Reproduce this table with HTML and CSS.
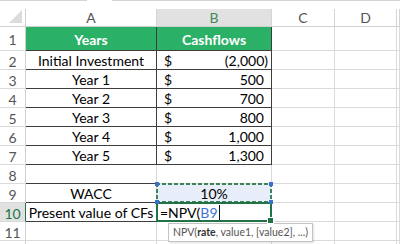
FILE: index.html
```html
<!DOCTYPE html>
<html>
<head>
<meta charset="utf-8">
<link rel="stylesheet" href="styles.css">
</head>
<body>
<div class="sheet">
  <div class="topbar"><span class="seg seg1"></span><span class="seg seg2"></span></div>
  <div class="grid">
    <div class="c corner"><span class="tri"></span></div>
    <div class="c h">A</div>
    <div class="c h sel">B</div>
    <div class="c h">C</div>
    <div class="c h">D</div>
    <div class="c h"></div>

    <div class="c rh">1</div>
    <div class="c ctr green bd-b bd-r">Years</div>
    <div class="c ctr green bd-b bd-r">Cashflows</div>
    <div class="c"></div><div class="c"></div><div class="c"></div>

    <div class="c rh">2</div>
    <div class="c ctr bd-b bd-r">Initial Investment</div>
    <div class="c acc bd-b bd-r"><span>$</span><span>(2,000)</span></div>
    <div class="c"></div><div class="c"></div><div class="c"></div>

    <div class="c rh">3</div>
    <div class="c ctr bd-b bd-r">Year 1</div>
    <div class="c acc bd-b bd-r"><span>$</span><span class="pos">500</span></div>
    <div class="c"></div><div class="c"></div><div class="c"></div>

    <div class="c rh">4</div>
    <div class="c ctr bd-b bd-r">Year 2</div>
    <div class="c acc bd-b bd-r"><span>$</span><span class="pos">700</span></div>
    <div class="c"></div><div class="c"></div><div class="c"></div>

    <div class="c rh">5</div>
    <div class="c ctr bd-b bd-r">Year 3</div>
    <div class="c acc bd-b bd-r"><span>$</span><span class="pos">800</span></div>
    <div class="c"></div><div class="c"></div><div class="c"></div>

    <div class="c rh">6</div>
    <div class="c ctr bd-b bd-r">Year 4</div>
    <div class="c acc bd-b bd-r"><span>$</span><span class="pos">1,000</span></div>
    <div class="c"></div><div class="c"></div><div class="c"></div>

    <div class="c rh">7</div>
    <div class="c ctr bd-b bd-r">Year 5</div>
    <div class="c acc bd-b bd-r"><span>$</span><span class="pos">1,300</span></div>
    <div class="c"></div><div class="c"></div><div class="c"></div>

    <div class="c rh">8</div>
    <div class="c bd-b"></div>
    <div class="c"></div>
    <div class="c"></div><div class="c"></div><div class="c"></div>

    <div class="c rh">9</div>
    <div class="c ctr bd-b">WACC</div>
    <div class="c ctr ref">10%<span class="sq tl"></span><span class="sq tr"></span><span class="sq bl"></span><span class="sq br"></span></div>
    <div class="c"></div><div class="c"></div><div class="c"></div>

    <div class="c rh rsel">10</div>
    <div class="c ctr bd-b">Present value of CFs</div>
    <div class="c edit">=NPV(<span class="blue">B9</span><span class="caret"></span><span class="handle"></span></div>
    <div class="c"></div><div class="c"></div><div class="c"></div>

    <div class="c rh">11</div>
    <div class="c"></div>
    <div class="c"></div>
    <div class="c"></div><div class="c"></div><div class="c"></div>

    <div class="c rh"></div>
    <div class="c"></div>
    <div class="c"></div>
    <div class="c"></div><div class="c"></div><div class="c"></div>
  </div>
  <div class="tooltip">NPV(<b>rate</b>, value1, [value2], ...)</div>
</div>
</body>
</html>
```
FILE: styles.css
```css
html, body {
  margin: 0;
  padding: 0;
  background: #ffffff;
}
.sheet {
  position: relative;
  width: 400px;
  height: 244px;
  overflow: hidden;
  background: #ffffff;
}
.topbar {
  height: 9px;
  display: flex;
}
.seg {
  height: 1px;
  background: #d4d4d4;
}
.seg1 { width: 87px; }
.seg2 { margin-left: 25px; flex: 1; }
.grid {
  display: grid;
  grid-template-columns: 26px 131px 115px 63px 62px 3px;
  grid-template-rows: 18px 24px repeat(10, 19px) 6px;
}
.c {
  box-sizing: border-box;
  border-right: 1px solid #dadada;
  border-bottom: 1px solid #dadada;
  font-family: Lato, "Liberation Sans", sans-serif;
  font-size: 14px;
  color: #000000;
  display: flex;
  align-items: center;
  white-space: nowrap;
  position: relative;
}
.corner {
  border-right-color: #cfcfcf;
  border-bottom-color: #cfcfcf;
}
.tri {
  position: absolute;
  right: 3px;
  bottom: 3px;
  width: 0;
  height: 0;
  border-left: 13px solid transparent;
  border-bottom: 13px solid #dcdcdc;
}
.h {
  justify-content: center;
  color: #555555;
  border-right-color: #d4d4d4;
  border-bottom-color: #cfcfcf;
}
.h.sel {
  background: #e1e1e1;
  color: #3f8a5a;
}
.rh {
  justify-content: center;
  color: #555555;
  border-right-color: #cfcfcf;
  border-bottom-color: #dadada;
  padding-top: 2px;
}
.rh.rsel {
  background: #e1e1e1;
  color: #217346;
  border-right-color: #217346;
}
.ctr {
  justify-content: center;
  padding-top: 1px;
}
.green {
  background: #2bb067;
  color: #ffffff;
  font-weight: bold;
  padding-top: 2px;
}
.bd-b { border-bottom-color: #3d3d3d; }
.bd-r { border-right-color: #3d3d3d; }
.acc {
  justify-content: space-between;
  padding: 1px 3px 0 7px;
}
.pos { padding-right: 4px; }
.ref {
  background: #e7eef9;
  border-right-color: transparent;
  border-bottom-color: transparent;
}
.ref::after {
  content: "";
  position: absolute;
  top: -1px;
  left: -1px;
  right: -1px;
  bottom: -1px;
  background:
    repeating-linear-gradient(90deg, #3b845a 0 4px, transparent 4px 6px) top left / 100% 2px no-repeat,
    repeating-linear-gradient(90deg, #3b845a 0 4px, transparent 4px 6px) bottom left / 100% 2px no-repeat,
    repeating-linear-gradient(180deg, #3b845a 0 4px, transparent 4px 6px) top left / 2px 100% no-repeat,
    repeating-linear-gradient(180deg, #3b845a 0 4px, transparent 4px 6px) top right / 2px 100% no-repeat;
}
.sq {
  position: absolute;
  width: 4px;
  height: 4px;
  background: #3a6fd0;
  z-index: 2;
}
.sq.tl { top: -2px; left: -2px; }
.sq.tr { top: -2px; right: -2px; }
.sq.bl { bottom: -2px; left: -2px; }
.sq.br { bottom: -2px; right: -2px; }
.edit {
  padding: 1px 0 0 3px;
  border-right-color: transparent;
  border-bottom-color: transparent;
}
.edit::after {
  content: "";
  position: absolute;
  top: -1px;
  left: -1px;
  right: -1px;
  bottom: -1px;
  border: 2px solid #217346;
}
.blue { color: #3f74d4; }
.caret {
  display: inline-block;
  width: 1px;
  height: 15px;
  background: #111111;
  margin-left: 1px;
}
.handle {
  position: absolute;
  right: -3px;
  bottom: -3px;
  width: 5px;
  height: 5px;
  background: #217346;
  border: 1px solid #ffffff;
  z-index: 2;
}
.tooltip {
  position: absolute;
  left: 168px;
  top: 223px;
  height: 19px;
  box-sizing: border-box;
  padding: 0 4px;
  border: 1px solid #c3c3c3;
  background: #ffffff;
  box-shadow: 1px 1px 2px rgba(0, 0, 0, 0.12);
  font-family: Lato, "Liberation Sans", sans-serif;
  font-size: 10.5px;
  line-height: 17px;
  color: #555555;
  white-space: nowrap;
}
.tooltip b {
  color: #333333;
}
```
